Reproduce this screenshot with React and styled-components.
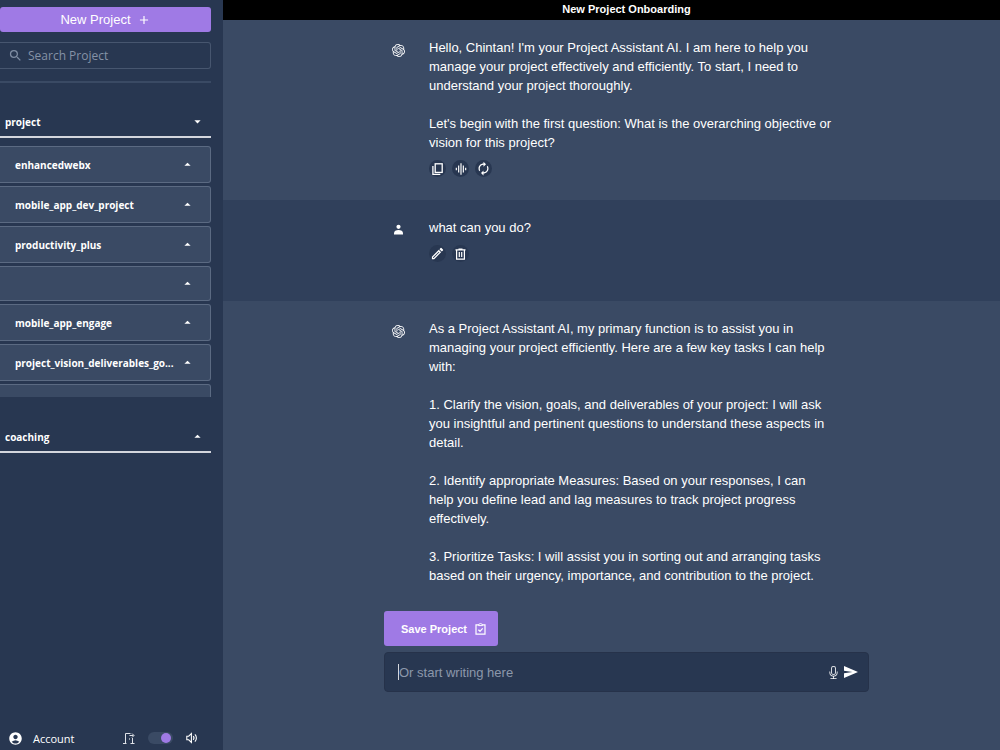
import React, { useState } from "react";
import styled, { createGlobalStyle } from "styled-components";
import {
  MdAccountCircle,
  MdAdd,
  MdArrowDropDown,
  MdArrowDropUp,
  MdAutorenew,
  MdGraphicEq,
  MdOutlineModeEdit,
  MdSearch,
} from "react-icons/md";
import { BsMic } from "react-icons/bs";
import { SiOpenai } from "react-icons/si";

const colors = {
  dark: "#283751",
  panel: "#3a4a64",
  user: "#30405b",
  border: "#5b6a82",
  purple: "#9f7ae5",
};

const GlobalStyle = createGlobalStyle`
  * {
    box-sizing: border-box;
  }
  body {
    margin: 0;
    background-color: ${colors.panel};
    color: white;
    font-family: "Liberation Sans", Arial, sans-serif;
  }
  button,
  input {
    font-family: inherit;
    color: inherit;
  }
  button {
    padding: 0;
    border: none;
    background: none;
    cursor: pointer;
  }
  svg {
    display: block;
    flex-shrink: 0;
  }
`;

const Layout = styled.div`
  display: flex;
  height: 100vh;
  overflow: hidden;
`;

const Sidebar = styled.aside`
  display: flex;
  flex-direction: column;
  flex: 0 0 223px;
  padding: 7px 12px 0 0;
  background-color: ${colors.dark};
  font-family: "Open Sans", "Noto Sans", sans-serif;
`;

const NewProjectButton = styled.button`
  display: flex;
  flex-shrink: 0;
  align-items: center;
  justify-content: center;
  gap: 6px;
  height: 25px;
  border-radius: 3px;
  background-color: ${colors.purple};
  font-family: "Liberation Sans", Arial, sans-serif;
  font-size: 13px;
`;

const SearchBox = styled.label`
  display: flex;
  flex-shrink: 0;
  align-items: center;
  gap: 5px;
  height: 27px;
  margin-top: 10px;
  padding-left: 8px;
  border: 1px solid #47566f;
  border-left: none;
  border-radius: 0 3px 3px 0;
  color: #7f8da3;
`;

const SearchInput = styled.input`
  flex: 1;
  min-width: 0;
  padding: 0;
  border: none;
  outline: none;
  background: none;
  font-size: 12px;
  &::placeholder {
    color: #8592a6;
    opacity: 1;
  }
`;

const Divider = styled.hr`
  width: 100%;
  height: 2px;
  margin: 12px 0 24px;
  border: none;
  background-color: ${colors.panel};
`;

const GroupHeader = styled.button`
  display: flex;
  flex-shrink: 0;
  align-items: center;
  justify-content: space-between;
  height: 31px;
  padding: 0 6px 0 5px;
  border-bottom: 2px solid #d3d6dd;
  font-size: 10px;
  font-weight: 700;
`;

const ProjectList = styled.ul`
  display: flex;
  flex-direction: column;
  flex-shrink: 0;
  gap: 3px;
  height: 251px;
  margin: 8px 0 25px;
  padding: 0;
  overflow: hidden;
  list-style: none;
`;

const ProjectItem = styled.li`
  flex-shrink: 0;
  height: ${(props) => (props.$empty ? "35px" : "37px")};
  border: 1px solid ${colors.border};
  border-left: none;
  border-radius: 0 3px 3px 0;
  background-color: ${colors.panel};
`;

const ProjectButton = styled.button`
  display: flex;
  align-items: center;
  justify-content: space-between;
  width: 100%;
  height: 100%;
  padding: 0 15px;
  font-size: 10px;
  font-weight: 700;
`;

const ProjectName = styled.span`
  white-space: nowrap;
`;

const SidebarFooter = styled.footer`
  display: flex;
  align-items: center;
  height: 24px;
  margin-top: auto;
  padding: 0 13px 0 8px;
`;

const AccountButton = styled.button`
  display: flex;
  align-items: center;
  gap: 10px;
  margin-right: auto;
  font-size: 11px;
`;

const FooterControls = styled.div`
  display: flex;
  align-items: center;
  gap: 13px;
`;

const Toggle = styled.input`
  appearance: none;
  display: flex;
  align-items: center;
  justify-content: ${(props) => (props.checked ? "flex-end" : "flex-start")};
  width: 25px;
  height: 12px;
  margin: 0;
  padding: 0 2px;
  border-radius: 6px;
  background-color: ${colors.panel};
  cursor: pointer;
  &::before {
    content: "";
    width: 10px;
    height: 10px;
    border-radius: 50%;
    background-color: ${colors.purple};
  }
`;

const Main = styled.main`
  display: flex;
  flex: 1;
  flex-direction: column;
  min-width: 0;
`;

const Title = styled.h1`
  flex-shrink: 0;
  height: 20px;
  margin: 0;
  padding-left: 30px;
  background-color: black;
  font-size: 11px;
  line-height: 18px;
  text-align: center;
`;

const Messages = styled.div`
  flex: 1;
  min-height: 0;
  overflow: hidden;
`;

const MessageRow = styled.section`
  min-height: 101px;
  padding: 18px 0 23px 30px;
  background-color: ${(props) => (props.$user ? colors.user : colors.panel)};
`;

const MessageInner = styled.div`
  display: flex;
  gap: 24px;
  width: 485px;
  margin: 0 auto;
  padding: 0 36px 0 8px;
`;

const Avatar = styled.div`
  display: flex;
  justify-content: center;
  width: 13px;
  padding-top: 6px;
`;

const MessageText = styled.p`
  margin: 0;
  font-size: 13px;
  line-height: 19px;
  white-space: pre-wrap;
`;

const Actions = styled.div`
  display: flex;
  gap: 6px;
  margin-top: 8px;
`;

const RoundButton = styled.button`
  display: flex;
  align-items: center;
  justify-content: center;
  width: 17px;
  height: 17px;
  border-radius: 50%;
  background-color: ${colors.dark};
`;

const Composer = styled.form`
  flex-shrink: 0;
  padding: 0 0 58px 30px;
`;

const ComposerInner = styled.div`
  width: 485px;
  margin: 0 auto;
`;

const SaveButton = styled.button`
  display: flex;
  align-items: center;
  gap: 8px;
  height: 35px;
  padding: 0 12px 0 17px;
  border-radius: 3px;
  background-color: ${colors.purple};
  font-size: 11px;
  font-weight: bold;
`;

const InputBar = styled.div`
  display: flex;
  align-items: center;
  gap: 4px;
  height: 40px;
  margin-top: 6px;
  padding: 0 10px 0 13px;
  border: 1px solid #26324a;
  border-radius: 4px;
  background-color: ${colors.dark};
`;

const PromptInput = styled.input`
  flex: 1;
  min-width: 0;
  height: 16px;
  padding: 0;
  border: none;
  border-left: 1px solid #d3d6dd;
  outline: none;
  background: none;
  font-size: 13px;
  &::placeholder {
    color: #8c98ab;
    opacity: 1;
  }
`;

const projects = [
  "enhancedwebx",
  "mobile_app_dev_project",
  "productivity_plus",
  "",
  "mobile_app_engage",
  "project_vision_deliverables_go...",
  "",
];

const greeting = `Hello, Chintan! I'm your Project Assistant AI. I am here to help you manage your project effectively and efficiently. To start, I need to understand your project thoroughly.

Let's begin with the first question: What is the overarching objective or vision for this project?`;

const answer = `As a Project Assistant AI, my primary function is to assist you in managing your project efficiently. Here are a few key tasks I can help with:

1. Clarify the vision, goals, and deliverables of your project: I will ask you insightful and pertinent questions to understand these aspects in detail.

2. Identify appropriate Measures: Based on your responses, I can help you define lead and lag measures to track project progress effectively.

3. Prioritize Tasks: I will assist you in sorting out and arranging tasks based on their urgency, importance, and contribution to the project.`;

const PersonIcon = () => (
  <svg width="11" height="11" viewBox="0 0 11 11" fill="white">
    <circle cx="5.5" cy="2.8" r="2.1" />
    <path d="M1 10.5V9.2C1 7.2 3 6 5.5 6S10 7.2 10 9.2v1.3z" />
  </svg>
);

const CopyIcon = () => (
  <svg width="11" height="12" viewBox="0 0 11 12" fill="none" stroke="white" strokeWidth="1.3">
    <rect x="3.2" y="0.8" width="7" height="8.6" />
    <path d="M0.9 3v8.3h7.4" />
  </svg>
);

const TrashIcon = () => (
  <svg width="11" height="12" viewBox="0 0 11 12" fill="none" stroke="white" strokeWidth="1.2">
    <path d="M0.5 1.9h10M3.5 1.2h4" />
    <path d="M1.6 2v9.2h7.8V2" />
    <path d="M4.3 4v5M6.7 4v5" />
  </svg>
);

const ClipboardIcon = () => (
  <svg width="11" height="12" viewBox="0 0 11 12" fill="none" stroke="white">
    <path d="M3.5 1.9H1v9.2h9V1.9H7.5" strokeWidth="1.2" />
    <path d="M3.5 2.6V1.4L5.5.6l2 .8v1.2z" />
    <path d="M3.4 6.8l1.6 1.5 2.7-3" strokeWidth="1.2" />
  </svg>
);

const DoorIcon = () => (
  <svg width="12" height="13" viewBox="0 0 12 13" fill="none" stroke="#dfe2e8">
    <path d="M0 11.5h3.5M2.5 11.5v-10h5M9.5 6v5.5M7.5 11.5h4" />
    <path d="M6.5 3.5h4M9 1.5l2 2-2 2" />
    <path d="M6.5 6v2" strokeOpacity="0.6" />
  </svg>
);

const SpeakerIcon = () => (
  <svg width="12" height="12" viewBox="0 0 12 12" fill="none" stroke="white" strokeWidth="1.1">
    <path d="M0.8 4.2h1.9L5.4 1.6v8.8L2.7 7.8H0.8z" />
    <path d="M7.2 4.2c.9 1 .9 2.6 0 3.6M8.9 2.4c2 2 2 5.2 0 7.2" />
  </svg>
);

const SendIcon = () => (
  <svg width="14" height="12" viewBox="0 0 14 12" fill="white">
    <path d="M0 0l14 6L0 12V7.3L8.5 6 0 4.7z" />
  </svg>
);

const Message = ({ user, text, children }) => (
  <MessageRow $user={user}>
    <MessageInner>
      <Avatar>{user ? <PersonIcon /> : <SiOpenai size={13} />}</Avatar>
      <div>
        <MessageText>{text}</MessageText>
        {children && <Actions>{children}</Actions>}
      </div>
    </MessageInner>
  </MessageRow>
);

const App = () => {
  const [sound, setSound] = useState(true);

  return (
    <Layout>
      <GlobalStyle />
      <Sidebar>
        <NewProjectButton type="button">
          New Project <MdAdd size={14} />
        </NewProjectButton>
        <SearchBox>
          <MdSearch size={15} />
          <SearchInput placeholder="Search Project" aria-label="Search Project" />
        </SearchBox>
        <Divider />
        <GroupHeader type="button">
          project <MdArrowDropDown size={15} />
        </GroupHeader>
        <ProjectList>
          {projects.map((name, i) => (
            <ProjectItem key={i} $empty={!name}>
              <ProjectButton type="button" aria-label={name || "Untitled"}>
                <ProjectName>{name}</ProjectName>
                <MdArrowDropUp size={15} />
              </ProjectButton>
            </ProjectItem>
          ))}
        </ProjectList>
        <GroupHeader type="button">
          coaching <MdArrowDropUp size={15} />
        </GroupHeader>
        <SidebarFooter>
          <AccountButton type="button">
            <MdAccountCircle size={15} /> Account
          </AccountButton>
          <FooterControls>
            <button type="button" aria-label="Log out">
              <DoorIcon />
            </button>
            <Toggle
              type="checkbox"
              aria-label="Sound"
              checked={sound}
              onChange={() => setSound(!sound)}
            />
            <SpeakerIcon />
          </FooterControls>
        </SidebarFooter>
      </Sidebar>
      <Main>
        <Title>New Project Onboarding</Title>
        <Messages>
          <Message text={greeting}>
            <RoundButton type="button" aria-label="Copy">
              <CopyIcon />
            </RoundButton>
            <RoundButton type="button" aria-label="Listen">
              <MdGraphicEq size={14} />
            </RoundButton>
            <RoundButton type="button" aria-label="Regenerate">
              <MdAutorenew size={15} />
            </RoundButton>
          </Message>
          <Message user text="what can you do?">
            <RoundButton type="button" aria-label="Edit">
              <MdOutlineModeEdit size={15} />
            </RoundButton>
            <RoundButton type="button" aria-label="Delete">
              <TrashIcon />
            </RoundButton>
          </Message>
          <Message text={answer} />
        </Messages>
        <Composer onSubmit={(e) => e.preventDefault()}>
          <ComposerInner>
            <SaveButton type="button">
              Save Project <ClipboardIcon />
            </SaveButton>
            <InputBar>
              <PromptInput
                placeholder="Or start writing here"
                aria-label="Message"
              />
              <button type="button" aria-label="Record">
                <BsMic size={13} />
              </button>
              <button type="submit" aria-label="Send">
                <SendIcon />
              </button>
            </InputBar>
          </ComposerInner>
        </Composer>
      </Main>
    </Layout>
  );
};

export default App;
